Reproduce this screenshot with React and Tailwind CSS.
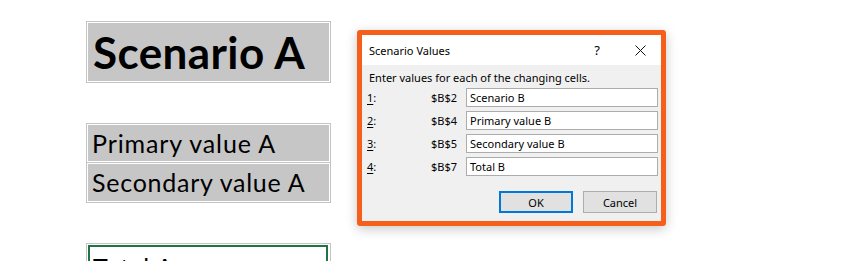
import React from "react";

const cellFont = { fontFamily: "Lato, 'Open Sans', sans-serif" };

function Row({ n, refText, value }) {
  return (
    <div className="flex items-center h-[19px]">
      <div className="w-[20px] text-[11px] leading-none text-[#000]">
        <span className="underline underline-offset-2">{n}</span>:
      </div>
      <div className="w-[70px] text-right text-[11px] leading-none text-[#000]">{refText}</div>
      <div className="ml-[9px] w-[192px] h-[19px] border border-[#acacac] bg-white flex items-center pl-[3px] text-[11px] leading-none text-black">
        {value}
      </div>
    </div>
  );
}

export default function App() {
  return (
    <div className="w-[868px] h-[261px] bg-white overflow-hidden flex items-start">
      {/* left sheet cells */}
      <div className="ml-[86px] mt-[21px] w-[245px] flex flex-col" style={cellFont}>
        <div className="h-[62px] border border-[#c4c4c4] p-px">
          <div className="h-full bg-[#c6c6c6] flex items-center pl-[5px] text-[44px] font-bold text-black leading-none tracking-[0.4px]">
            Scenario A
          </div>
        </div>
        <div className="mt-[40px] h-[40px] border border-[#c4c4c4] p-px">
          <div className="h-full bg-[#c6c6c6] flex items-center pl-[4px] text-[25px] text-black leading-none tracking-[0.9px]">
            Primary value A
          </div>
        </div>
        <div className="h-[40px] border border-[#c4c4c4] border-t-0 p-px">
          <div className="h-full bg-[#c6c6c6] flex items-center pl-[4px] text-[25px] text-black leading-none tracking-[0.75px]">
            Secondary value A
          </div>
        </div>
        <div className="mt-[40px] h-[40px] border border-[#c4c4c4] p-px pr-[2px]">
          <div className="h-full border-2 border-[#217346] pl-[3px] pt-[8px] text-[25px] text-black leading-none tracking-[0.8px]">
            Total A
          </div>
        </div>
      </div>

      {/* dialog */}
      <div
        className="ml-[26px] mt-[30px] w-[309px] h-[196px] border-[5px] border-[#f65e1b] rounded-[3px] shadow-[0_3px_12px_rgba(0,0,0,0.22)] flex flex-col overflow-hidden"
        style={{ fontFamily: "'Noto Sans', 'Open Sans', sans-serif" }}
      >
        <div className="h-[30px] bg-white flex items-center pl-[7px] shrink-0">
          <span className="text-[11px] text-black leading-none">Scenario Values</span>
          <span className="ml-auto mr-[35px] text-[13px] text-black leading-none">?</span>
          <svg width="11" height="11" viewBox="0 0 11 11" className="mr-[15px]">
            <path d="M0.5 0.5 L10.5 10.5 M10.5 0.5 L0.5 10.5" stroke="#111" strokeWidth="1" />
          </svg>
        </div>
        <div className="flex-1 bg-[#f0f0f0] flex flex-col">
          <div className="pl-[7px] pt-[5px] h-[23px] text-[11px] leading-[16px] text-black">
            Enter values for each of the changing cells.
          </div>
          <div className="pl-[5px] flex flex-col gap-[4px]">
            <Row n="1" refText="$B$2" value="Scenario B" />
            <Row n="2" refText="$B$4" value="Primary value B" />
            <Row n="3" refText="$B$5" value="Secondary value B" />
            <Row n="4" refText="$B$7" value="Total B" />
          </div>
          <div className="mt-[15px] flex justify-end gap-[10px] pr-[4px]">
            <button className="w-[74px] h-[22px] border-2 border-[#0078d7] bg-[#e1e1e1] text-[11px] text-black leading-none">
              OK
            </button>
            <button className="w-[74px] h-[22px] border border-[#adadad] bg-[#e1e1e1] text-[11px] text-black leading-none">
              Cancel
            </button>
          </div>
        </div>
      </div>
    </div>
  );
}
